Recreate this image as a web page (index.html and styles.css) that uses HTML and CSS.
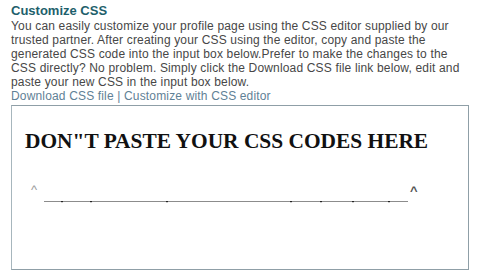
FILE: index.html
```html
<!DOCTYPE html>
<html>
<head>
<meta charset="utf-8">
<link rel="stylesheet" href="styles.css">
</head>
<body>
<div class="page">
  <h2 class="title">Customize CSS</h2>
  <p class="intro">You can easily customize your profile page using the CSS editor supplied by our<br>trusted partner. After creating your CSS using the editor, copy and paste the<br>generated CSS code into the input box below.Prefer to make the changes to the<br>CSS directly? No problem. Simply click the Download CSS file link below, edit and<br>paste your new CSS in the input box below.<br><a class="link" href="#">Download CSS file</a><span class="sep"> | </span><a class="link" href="#">Customize with CSS editor</a></p>
  <div class="box">
    <h1 class="warn">DON"T PASTE YOUR CSS CODES HERE</h1>
    <div class="rule-row">
      <span class="caret caret-left">^</span>
      <svg class="rule" width="364" height="3" viewBox="0 0 364 3">
        <rect x="0" y="1" width="364" height="1" fill="#8c8c8c"/>
        <rect x="17" y="1" width="2" height="1.2" fill="#222"/>
        <rect x="46" y="1" width="2" height="1.2" fill="#222"/>
        <rect x="122" y="1" width="2" height="1.2" fill="#222"/>
        <rect x="246" y="1" width="2" height="1.2" fill="#222"/>
        <rect x="276" y="1" width="2" height="1.2" fill="#222"/>
        <rect x="308" y="1" width="2" height="1.2" fill="#222"/>
        <rect x="344" y="1" width="2" height="1.2" fill="#222"/>
      </svg>
      <span class="caret caret-right">^</span>
    </div>
  </div>
</div>
</body>
</html>
```
FILE: styles.css
```css
html, body {
  margin: 0;
  padding: 0;
  background: #ffffff;
}

.page {
  padding: 3px 11px 0 11px;
  font-family: "Liberation Sans", Arial, sans-serif;
}

.title {
  margin: 0;
  font-size: 13px;
  line-height: 16px;
  font-weight: bold;
  color: #1e5f6c;
}

.intro {
  margin: 0;
  font-size: 12px;
  line-height: 14px;
  letter-spacing: 0.16px;
  color: #474747;
  white-space: nowrap;
}

.link {
  color: #5f8196;
  text-decoration: none;
}

.sep {
  color: #5f8196;
}

.box {
  margin-top: 2px;
  width: 456px;
  height: 163px;
  border: 1px solid #8f9fa7;
  border-left-color: #a7b6bd;
  box-sizing: content-box;
  padding: 0;
}

.warn {
  margin: 23px 0 0 13px;
  font-family: "Liberation Serif", "Times New Roman", serif;
  font-size: 21.4px;
  line-height: 24px;
  font-weight: bold;
  color: #111111;
  white-space: nowrap;
}

.rule-row {
  display: flex;
  align-items: flex-start;
  margin: 30px 0 0 19px;
  height: 20px;
}

.caret {
  font-family: "Liberation Sans", Arial, sans-serif;
  font-size: 13px;
  line-height: 14px;
}

.caret-left {
  width: 13px;
  color: #9a9a9a;
}

.caret-right {
  margin-left: 2px;
  margin-top: 1px;
  color: #555555;
  font-weight: bold;
}

.rule {
  display: block;
  margin-top: 17px;
}
```
